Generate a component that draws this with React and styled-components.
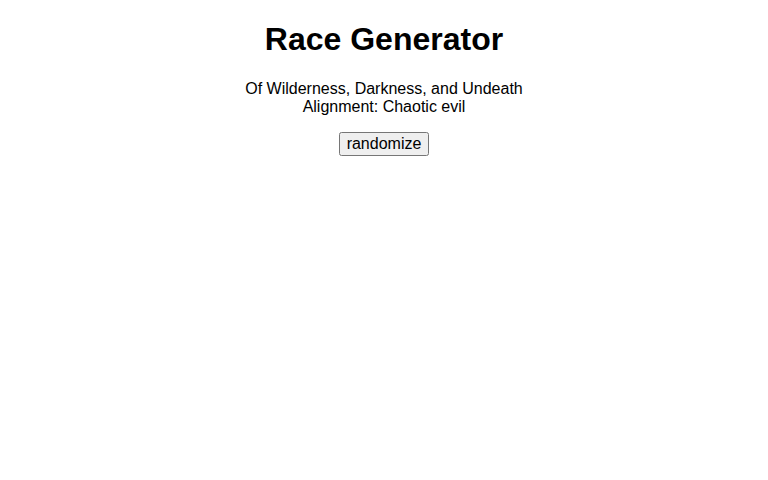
import React, { useState } from 'react';
import styled, { createGlobalStyle } from 'styled-components';

const GlobalStyle = createGlobalStyle`
  body {
    margin: 8px;
    background: #fff;
    color: #000;
    font-family: Arial, 'Liberation Sans', sans-serif;
    font-size: 16px;
    line-height: 18px;
  }
`;

const Page = styled.main`
  display: flex;
  flex-direction: column;
  align-items: center;
  text-align: center;
`;

const Title = styled.h1`
  margin: 13px 0 22px;
  font-size: 32px;
  line-height: 37px;
  font-weight: bold;
`;

const Description = styled.p`
  margin: 0 0 16px;
`;

const Line = styled.span`
  display: block;
`;

const RandomizeButton = styled.button`
  font-family: inherit;
  font-size: 16px;
`;

const races = [
  { domains: ['Wilderness', 'Darkness', 'Undeath'], alignment: 'Chaotic evil' },
  { domains: ['Forests', 'Song', 'Light'], alignment: 'Chaotic good' },
  { domains: ['Mountains', 'Craft', 'Fire'], alignment: 'Lawful neutral' },
  { domains: ['Seas', 'Storms', 'Trade'], alignment: 'True neutral' },
];

const App = () => {
  const [index, setIndex] = useState(0);
  const { domains, alignment } = races[index];
  const [first, second, third] = domains;

  const randomize = () => {
    const step = 1 + Math.floor(Math.random() * (races.length - 1));
    setIndex((index + step) % races.length);
  };

  return (
    <Page>
      <GlobalStyle />
      <Title>Race Generator</Title>
      <Description>
        <Line>{`Of ${first}, ${second}, and ${third}`}</Line>
        <Line>{`Alignment: ${alignment}`}</Line>
      </Description>
      <RandomizeButton type="button" onClick={randomize}>
        randomize
      </RandomizeButton>
    </Page>
  );
};

export default App;
